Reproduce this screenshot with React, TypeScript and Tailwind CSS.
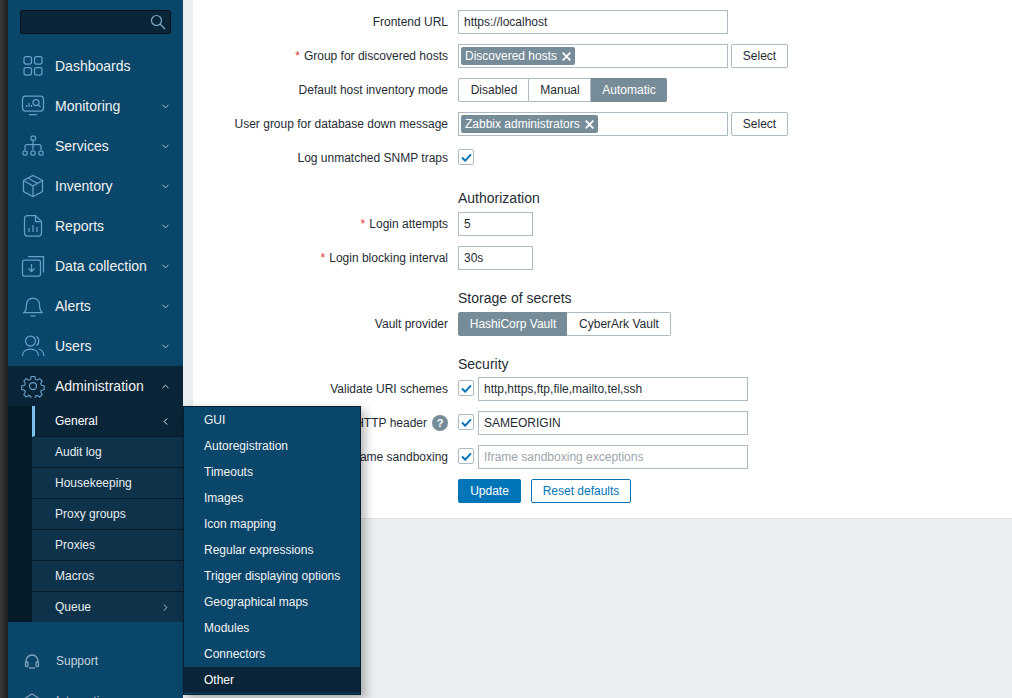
import type { ReactNode } from "react";
import { ChevronDown, ChevronLeft, ChevronRight, ChevronUp } from "lucide-react";

const iconClass = "w-[24px] h-[24px] fill-none stroke-[#669fc9] stroke-[1.25]";

const icons: Record<string, ReactNode> = {
  dashboards: (
    <svg viewBox="0 0 24 24" className={iconClass}>
      <rect x="3" y="2.500" width="7.500" height="7.500" rx="2" />
      <rect x="13.500" y="2.500" width="7.500" height="7.500" rx="2" />
      <rect x="3" y="13.500" width="7.500" height="7.500" rx="2" />
      <rect x="13.500" y="13.500" width="7.500" height="7.500" rx="2" />
    </svg>
  ),
  monitoring: (
    <svg viewBox="0 0 24 24" className={iconClass}>
      <rect x="1.500" y="2" width="21" height="15" rx="3" />
      <path d="M8 20.500h8M5.500 13v-2M8 13V9M10.500 13v-2" />
      <circle cx="15" cy="8.500" r="3" />
      <path d="M17.200 10.700l2.300 2.300" />
    </svg>
  ),
  services: (
    <svg viewBox="0 0 24 24" className={iconClass}>
      <rect x="10" y="2" width="4.500" height="4" rx="1" />
      <path d="M12 6v4M4 16v-3.500a2 2 0 0 1 2-2h12a2 2 0 0 1 2 2v3.500M12 10.500V16" />
      <rect x="2" y="17" width="4" height="4" rx="1" />
      <rect x="10" y="17" width="4" height="4" rx="1" />
      <rect x="18" y="17" width="4" height="4" rx="1" />
    </svg>
  ),
  inventory: (
    <svg viewBox="0 0 24 24" className={iconClass}>
      <path d="M12 1.500l9.500 5v11L12 22.500l-9.500-5v-11z" />
      <path d="M2.500 6.500L12 12l9.500-5.500M12 12v10.500M7 4l9.500 5.500" />
    </svg>
  ),
  reports: (
    <svg viewBox="0 0 24 24" className={iconClass}>
      <path d="M6.500 1.500h8l6 6V19a3 3 0 0 1-3 3h-11a3 3 0 0 1-3-3V4.500a3 3 0 0 1 3-3z" />
      <path d="M14.500 1.500v6h6M8 18v-4M12 18v-7M16 18v-5" />
    </svg>
  ),
  data: (
    <svg viewBox="0 0 24 24" className={iconClass}>
      <rect x="1.500" y="6" width="18" height="16" rx="2" />
      <path d="M7 2.500h15.500v16M10.500 10v7.500M7.500 14.500l3 3 3-3" />
    </svg>
  ),
  alerts: (
    <svg viewBox="0 0 24 24" className={iconClass}>
      <path d="M3 18.500c2-2 2.500-3.500 2.500-8a6.500 6.500 0 0 1 13 0c0 4.500.5 6 2.500 8z" />
      <path d="M9.500 22h5" />
    </svg>
  ),
  users: (
    <svg viewBox="0 0 24 24" className={iconClass}>
      <circle cx="9.500" cy="7" r="5" />
      <path d="M1.500 22c0-4 3-7 8-7s8 3 8 7M15.500 2.500c3 1.500 3 7.500 0 9M18 15c3 .8 4.500 3.500 5 7" />
    </svg>
  ),
  administration: (
    <svg viewBox="0 0 24 24" className={iconClass}>
      <circle cx="12" cy="12" r="3.500" />
      <path d="M10 1.500h4l.7 3.200 2 .8 2.800-1.700 2.700 2.800-1.700 2.700.8 2 3.200.7v4l-3.200.7-.8 2 1.700 2.800-2.700 2.700-2.800-1.700-2 .8-.7 2.900h-4l-.7-2.900-2-.8-2.800 1.700-2.700-2.700 1.700-2.800-.8-2-3.200-.7v-4l3.200-.7.8-2-1.700-2.700 2.700-2.800 2.800 1.700 2-.8z" transform="translate(1.200 1.200) scale(.9)" />
    </svg>
  ),
};

const nav = [
  { key: "dashboards", label: "Dashboards", arrow: false },
  { key: "monitoring", label: "Monitoring", arrow: true },
  { key: "services", label: "Services", arrow: true },
  { key: "inventory", label: "Inventory", arrow: true },
  { key: "reports", label: "Reports", arrow: true },
  { key: "data", label: "Data collection", arrow: true },
  { key: "alerts", label: "Alerts", arrow: true },
  { key: "users", label: "Users", arrow: true },
];

const subItems = ["Audit log", "Housekeeping", "Proxy groups", "Proxies", "Macros"];

const flyoutItems = [
  "GUI",
  "Autoregistration",
  "Timeouts",
  "Images",
  "Icon mapping",
  "Regular expressions",
  "Trigger displaying options",
  "Geographical maps",
  "Modules",
  "Connectors",
];

function NavIcon({ children }: { children: ReactNode }) {
  return <span className="w-[24px] h-[24px] ml-[13px] mr-[10px] shrink-0 flex">{children}</span>;
}

function Row({ label, required, children, extra, className = "mb-[10px]" }: { label?: string; required?: boolean; children: ReactNode; extra?: ReactNode; className?: string }) {
  return (
    <div className={`flex items-center h-[24px] ${className}`}>
      <div className="w-[255px] shrink-0 text-right flex items-center justify-end text-[12px] text-[#1f2c33] whitespace-nowrap">
        {required && <span className="text-[#e33734] mr-[4px]">*</span>}
        {label}
        {extra}
      </div>
      <div className="ml-[10px] flex items-center">{children}</div>
    </div>
  );
}

function TextBox({ value, placeholder, width = "w-[270px]" }: { value?: string; placeholder?: string; width?: string }) {
  return (
    <div className={`${width} h-[24px] border border-[#acbbc2] bg-white px-[5px] flex items-center text-[12px] ${value ? "text-[#1f2c33]" : "text-[#9aa5ab]"}`}>
      {value ?? placeholder}
    </div>
  );
}

function Tag({ label }: { label: string }) {
  return (
    <div className="w-[270px] h-[24px] border border-[#acbbc2] bg-white pl-[2px] flex items-center">
      <span className="h-[18px] bg-[#768d99] rounded-[2px] px-[4px] flex items-center gap-[5px] text-[12px] text-white">
        {label}
        <svg viewBox="0 0 9 9" className="w-[9px] h-[9px] fill-none stroke-white stroke-[1.8]">
          <path d="M.7.700l7.600 7.600M8.300.700L.7 8.300" />
        </svg>
      </span>
    </div>
  );
}

function SelectButton() {
  return (
    <button className="ml-[3px] w-[57px] h-[24px] border border-[#acbbc2] rounded-[2px] bg-white text-[12px] text-[#1f2c33]">
      Select
    </button>
  );
}

function Segments({ items }: { items: { label: string; width: string; active?: boolean }[] }) {
  return (
    <div className="flex h-[24px]">
      {items.map((item, i) => (
        <div
          key={item.label}
          className={`${item.width} pl-[1px] flex items-center justify-center text-[12px] border ${i > 0 ? "border-l-0" : "rounded-l-[2px]"} ${i === items.length - 1 ? "rounded-r-[2px]" : ""} ${
            item.active ? "bg-[#768d99] border-[#768d99] text-white" : "bg-white border-[#acbbc2] text-[#1f2c33]"
          }`}
        >
          {item.label}
        </div>
      ))}
    </div>
  );
}

function CheckBox({ className = "" }: { className?: string }) {
  return (
    <span className={`w-[16px] h-[16px] mb-[2px] border border-[#acbbc2] rounded-[2px] bg-white flex items-center justify-center ${className}`}>
      <svg viewBox="0 0 12 10" className="w-[11px] h-[9px] fill-none stroke-[#0275b8] stroke-[2.2]">
        <path d="M1 5l3.500 3.500L11 1.500" />
      </svg>
    </span>
  );
}

function Heading({ children, className = "mb-[4px]" }: { children: ReactNode; className?: string }) {
  return <div className={`ml-[265px] mt-[18px] h-[20px] flex items-center text-[14px] text-[#1f2c33] ${className}`}>{children}</div>;
}

export default function App() {
  return (
    <div className="relative flex h-[698px] overflow-hidden bg-[#ebeef0] font-['Liberation_Sans',Arial,sans-serif]">
      <div className="w-[8px] shrink-0 bg-gradient-to-r from-[#3b3b3b] to-[#1d1d1d]" />

      <aside className="relative w-[175px] shrink-0 bg-[#0a466a] text-[#f2f2f2]">
        <div className="mx-[12px] mt-[10px] h-[24px] bg-[#0a2537] border border-[#04141f] rounded-[2px] flex items-center justify-end pr-[4px]">
          <svg viewBox="0 0 16 16" className="w-[16px] h-[16px] fill-none stroke-[#7fa9c4] stroke-[1.200]">
            <circle cx="6.500" cy="6.500" r="5" />
            <path d="M10 10l5 5" />
          </svg>
        </div>

        <nav className="mt-[12px]">
          {nav.map((item) => (
            <div key={item.key} className="h-[40px] flex items-center text-[14px]">
              <NavIcon>{icons[item.key]}</NavIcon>
              <span>{item.label}</span>
              {item.arrow && <ChevronDown size={11} strokeWidth={2} className="ml-auto mr-[12px] text-[#c3d2dc]" />}
            </div>
          ))}

          <div className="h-[40px] flex items-center text-[14px] bg-[#0a2537]">
            <NavIcon>{icons.administration}</NavIcon>
            <span>Administration</span>
            <ChevronUp size={11} strokeWidth={2} className="ml-auto mr-[12px] text-[#e2e8ec]" />
          </div>

          <div className="bg-[#041b29] pl-[24px] text-[12px]">
            <div className="h-[31px] flex items-center bg-[#0a2537] border-l-[3px] border-[#7cc0ec] border-b border-b-[#041b29] pl-[20px] text-white">
              General
              <ChevronLeft size={11} strokeWidth={2} className="ml-auto mr-[12px]" />
            </div>
            {subItems.map((label) => (
              <div key={label} className="h-[31px] flex items-center bg-[#0d3249] border-b border-[#041b29] pl-[23px] text-[#e9edf0]">
                {label}
              </div>
            ))}
            <div className="h-[30px] flex items-center bg-[#0d3249] pl-[23px] text-[#e9edf0]">
              Queue
              <ChevronRight size={11} strokeWidth={2} className="ml-auto mr-[12px] text-[#c3d2dc]" />
            </div>
          </div>

          <div className="mt-[19px] h-[40px] flex items-center text-[12px] text-[#c5d3dc]">
            <svg viewBox="0 0 16 16" className="w-[16px] h-[16px] ml-[16px] mr-[16px] fill-none stroke-[#7fa3ba] stroke-[1.300]">
              <path d="M2 10V8a6 6 0 0 1 12 0v2" />
              <rect x="1.500" y="9" width="2.500" height="4.500" rx="1" />
              <rect x="12" y="9" width="2.500" height="4.500" rx="1" />
              <path d="M5 15h6" />
            </svg>
            Support
          </div>
          <div className="h-[40px] flex items-center text-[12px] text-[#c5d3dc]">
            <svg viewBox="0 0 16 16" className="w-[16px] h-[16px] ml-[16px] mr-[16px] fill-none stroke-[#7fa3ba] stroke-[1.300]">
              <path d="M8 1l6 3.500v7L8 15l-6-3.500v-7z" />
            </svg>
            Integrations
          </div>
        </nav>
      </aside>

      <main className="flex-1 ml-[10px]">
        <section className="bg-white pt-[10px] h-[519px] border-b border-[#dfe4e7]">
          <Row label="Frontend URL">
            <TextBox value="https://localhost" />
          </Row>
          <Row label="Group for discovered hosts" required>
            <Tag label="Discovered hosts" />
            <SelectButton />
          </Row>
          <Row label="Default host inventory mode">
            <Segments
              items={[
                { label: "Disabled", width: "w-[71px]" },
                { label: "Manual", width: "w-[62px]" },
                { label: "Automatic", width: "w-[76px]", active: true },
              ]}
            />
          </Row>
          <Row label="User group for database down message">
            <Tag label="Zabbix administrators" />
            <SelectButton />
          </Row>
          <Row label="Log unmatched SNMP traps">
            <CheckBox />
          </Row>

          <Heading>Authorization</Heading>
          <Row label="Login attempts" required>
            <TextBox value="5" width="w-[75px]" />
          </Row>
          <Row label="Login blocking interval" required>
            <TextBox value="30s" width="w-[75px]" />
          </Row>

          <Heading>Storage of secrets</Heading>
          <Row label="Vault provider">
            <Segments
              items={[
                { label: "HashiCorp Vault", width: "w-[109px]", active: true },
                { label: "CyberArk Vault", width: "w-[104px]" },
              ]}
            />
          </Row>

          <Heading className="mb-[3px]">Security</Heading>
          <Row label="Validate URI schemes">
            <CheckBox className="mr-[4px]" />
            <TextBox value="http,https,ftp,file,mailto,tel,ssh" />
          </Row>
          <Row
            label="X-Frame-Options HTTP header"
            extra={
              <span className="ml-[5px] w-[16px] h-[16px] rounded-full bg-[#768d99] text-white text-[11px] font-bold flex items-center justify-center">?</span>
            }
          >
            <CheckBox className="mr-[4px]" />
            <TextBox value="SAMEORIGIN" />
          </Row>
          <Row label="Use iframe sandboxing">
            <CheckBox className="mr-[4px]" />
            <TextBox placeholder="Iframe sandboxing exceptions" />
          </Row>
          <Row className="">
            <button className="w-[63px] h-[24px] bg-[#0275b8] rounded-[2px] text-white text-[12px]">Update</button>
            <button className="ml-[10px] w-[100px] h-[24px] border border-[#0275b8] rounded-[2px] bg-white text-[#0275b8] text-[12px]">Reset defaults</button>
          </Row>
        </section>
      </main>

      {/* General submenu popup */}
      <div className="absolute left-[183px] top-[406px] w-[178px] h-[289px] bg-[#0a466a] border border-[#06202f] shadow-[4px_4px_10px_rgba(0,0,0,0.3)] text-[12px] text-[#f2f2f2]">
        {flyoutItems.map((label) => (
          <div key={label} className="h-[26px] flex items-center pl-[20px]">
            {label}
          </div>
        ))}
        <div className="h-[26px] flex items-center pl-[20px] bg-[#0a2537] text-white">Other</div>
      </div>
    </div>
  );
}
